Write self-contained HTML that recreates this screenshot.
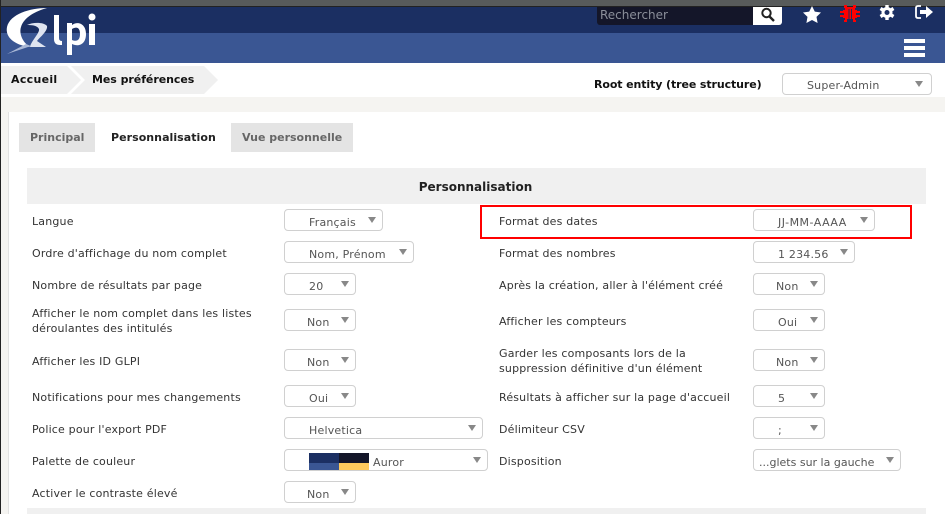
<!DOCTYPE html>
<html><head><meta charset="utf-8">
<style>
html,body{margin:0;padding:0;width:945px;height:514px;overflow:hidden;background:#fff}
body{position:relative;font-family:"DejaVu Sans",sans-serif;font-size:11px;color:#333}
div,span{position:absolute;box-sizing:border-box}
.l{white-space:nowrap;line-height:14px;letter-spacing:.18px;color:#333;margin-top:1px}
.h{font-weight:bold;letter-spacing:0;color:#111}
.s{height:22px;border:1px solid #d0d0d0;border-radius:4px;background:#fff;color:#555;white-space:nowrap}
.s span.t{left:24px;top:6px;line-height:14px;letter-spacing:.2px}
.s i{position:absolute;right:6px;top:7px;width:0;height:0;border-left:4.500px solid transparent;border-right:4.500px solid transparent;border-top:6px solid #888}
</style></head><body>
<div style="left:0;top:0;width:945px;height:7px;background:#585b5b;border-bottom:1px solid #222"></div>
<div style="left:0;top:7px;width:945px;height:26px;background:#1b2f62"></div>
<div style="left:0;top:33px;width:945px;height:30px;background:#3a5693"></div>
<div style="left:0;top:0;width:1px;height:514px;background:#222"></div>

<svg style="position:absolute;left:0;top:0" width="110" height="64">
<path d="M47 8C30 8 10 14 7 27C5 37 14 45 30 47C22 42 19 33 21 27C24 17 36 11 47 8Z" fill="#fff"/>
<path d="M27 25C33 22 44 22 47 26C48 31 40 37 37 41L46 47L30 47C31 41 40 33 39 29C37 25 31 25 27 25Z" fill="#dfe4f0"/>
<path d="M7 54L26 44L31 46Z" fill="#aab8d6"/>
<path d="M54 15h5v23q0 3 3 3v4h-2q-6 0-6-6Z" fill="#fff"/>
<path d="M67 23h5v2c5-4 14-2 14 9c0 11-8 13-14 10v11h-5Zm5 6v11c5 2 8 0 8-6c0-6-3-8-8-5Z" fill="#fff" fill-rule="evenodd"/>
<rect x="89" y="24" width="6" height="21" fill="#fff"/>
<circle cx="92" cy="17" r="3.500" fill="#fff"/>
</svg>

<div style="left:597px;top:7px;width:157px;height:18px;background:#141629;border-radius:0 0 0 3px"></div>
<div style="left:600px;top:7px;color:#8a8e99;font-size:12px;line-height:16px;white-space:nowrap">Rechercher</div>
<div style="left:753px;top:7px;width:29px;height:18px;background:#fff;border-radius:0 0 3px 0"></div>
<svg style="position:absolute;left:760px;top:7px" width="16" height="16"><circle cx="6.500" cy="6" r="4.200" fill="none" stroke="#222" stroke-width="2"/><path d="M9.500 9.500L14 14" stroke="#222" stroke-width="2.400"/></svg>
<svg style="position:absolute;left:802px;top:5px" width="20" height="18"><path d="M10 1l2.800 5.600 6.200.9-4.500 4.400 1.100 6.100-5.600-3-5.600 3 1.100-6.100L1 7.500l6.200-.9Z" fill="#fff"/></svg>
<svg style="position:absolute;left:840px;top:5px" width="20" height="17"><path d="M4 0h3v2h6V0h3v3h-1v2h2v1h3v2h-4v2h4v2h-3v1h-2v2h1v2h-3v-3H7v3H4v-2h1v-2H3v-1H0v-2h4V8H0V6h3V5h2V3H4Z" fill="#f00"/><path d="M9 4v12M11.500 4v12" stroke="#1b2f62" stroke-width="1"/></svg>
<svg style="position:absolute;left:878px;top:4px" width="18" height="17"><circle cx="9" cy="8.500" r="5.500" fill="#fff"/><path d="M9 1v3M9 13v3M2.500 4.500l2.500 1.500M13 11l2.500 1.500M2.500 12.500L5 11M13 6l2.500-1.500" stroke="#fff" stroke-width="3.400"/><circle cx="9" cy="8.500" r="2.500" fill="#1b2f62"/></svg>
<svg style="position:absolute;left:914px;top:4px" width="20" height="16"><path d="M7 2H4Q2 2 2 4v8q0 2 2 2h3" fill="none" stroke="#fff" stroke-width="1.800"/><path d="M6 6h6V2l7 6-7 6v-4H6Z" fill="#fff"/></svg>
<div style="left:904px;top:39px;width:21px;height:4px;background:#fff"></div>
<div style="left:904px;top:46px;width:21px;height:4px;background:#fff"></div>
<div style="left:904px;top:53px;width:21px;height:4px;background:#fff"></div>

<svg style="position:absolute;left:1px;top:66px" width="220" height="28"><path d="M0 0H66L80 14L66 28H0Z" fill="#f0f0f0"/><path d="M70 0H203L217 14L203 28H70L84 14Z" fill="#f0f0f0"/></svg>
<div class="l h" style="left:11px;top:72px;letter-spacing:.3px">Accueil</div>
<div class="l h" style="left:92px;top:72px;letter-spacing:-.05px">Mes préférences</div>
<div class="l h" style="left:594px;top:77px;letter-spacing:-.1px">Root entity (tree structure)</div>
<div class="s" style="left:782px;top:73px;width:150px"><span class="t" style="top:5px">Super-Admin</span><i style="right:8px"></i></div>

<div style="left:1px;top:97px;width:944px;height:417px;background:#f5f4f1"></div>
<div style="left:8px;top:112px;width:937px;height:402px;background:#fff;border-left:1px solid #e2e2e2"></div>

<div style="left:19px;top:123px;width:76px;height:29px;background:#e4e4e4"></div>
<div class="l h" style="left:30px;top:130px;color:#666">Principal</div>
<div class="l h" style="left:111px;top:130px;color:#222;letter-spacing:.05px">Personnalisation</div>
<div style="left:231px;top:123px;width:122px;height:29px;background:#e4e4e4"></div>
<div class="l h" style="left:242px;top:130px;color:#666">Vue personnelle</div>

<div style="left:27px;top:168px;width:899px;height:36px;background:#f0f0f0"></div>
<div style="left:26px;top:179px;width:899px;text-align:center;font-weight:bold;font-size:12px;line-height:16px;color:#222">Personnalisation</div>

<div class="l" style="left:32px;top:214px">Langue</div>
<div class="l" style="left:32px;top:246px">Ordre d'affichage du nom complet</div>
<div class="l" style="left:32px;top:278px">Nombre de résultats par page</div>
<div class="l" style="left:32px;top:306px">Afficher le nom complet dans les listes</div>
<div class="l" style="left:32px;top:321px">déroulantes des intitulés</div>
<div class="l" style="left:32px;top:354px">Afficher les ID GLPI</div>
<div class="l" style="left:32px;top:390px">Notifications pour mes changements</div>
<div class="l" style="left:32px;top:422px">Police pour l'export PDF</div>
<div class="l" style="left:32px;top:454px">Palette de couleur</div>
<div class="l" style="left:32px;top:486px">Activer le contraste élevé</div>

<div class="s" style="left:284px;top:209px;width:99px"><span class="t">Français</span><i></i></div>
<div class="s" style="left:284px;top:241px;width:130px"><span class="t">Nom, Prénom</span><i></i></div>
<div class="s" style="left:284px;top:273px;width:72px"><span class="t">20</span><i></i></div>
<div class="s" style="left:284px;top:309px;width:72px"><span class="t" style="left:22px">Non</span><i></i></div>
<div class="s" style="left:284px;top:349px;width:72px"><span class="t" style="left:22px">Non</span><i></i></div>
<div class="s" style="left:284px;top:385px;width:72px"><span class="t">Oui</span><i></i></div>
<div class="s" style="left:284px;top:417px;width:199px"><span class="t">Helvetica</span><i></i></div>
<div class="s" style="left:284px;top:449px;width:204px">
<span style="left:24px;top:3px;width:30px;height:10px;background:#1b2f62"></span>
<span style="left:54px;top:3px;width:30px;height:10px;background:#141629"></span>
<span style="left:24px;top:13px;width:30px;height:7px;background:#3a5693"></span>
<span style="left:54px;top:13px;width:30px;height:7px;background:#fec95c"></span>
<span class="t" style="left:88px">Auror</span><i></i></div>
<div class="s" style="left:284px;top:481px;width:72px"><span class="t" style="left:22px">Non</span><i></i></div>

<div class="l" style="left:499px;top:214px">Format des dates</div>
<div class="l" style="left:499px;top:246px">Format des nombres</div>
<div class="l" style="left:499px;top:278px">Après la création, aller à l'élément créé</div>
<div class="l" style="left:499px;top:314px">Afficher les compteurs</div>
<div class="l" style="left:499px;top:346px">Garder les composants lors de la</div>
<div class="l" style="left:499px;top:361px">suppression définitive d'un élément</div>
<div class="l" style="left:499px;top:390px">Résultats à afficher sur la page d'accueil</div>
<div class="l" style="left:499px;top:422px">Délimiteur CSV</div>
<div class="l" style="left:499px;top:454px">Disposition</div>

<div class="s" style="left:753px;top:209px;width:122px"><span class="t" style="letter-spacing:.5px">JJ-MM-AAAA</span><i></i></div>
<div class="s" style="left:753px;top:241px;width:102px"><span class="t">1 234.56</span><i></i></div>
<div class="s" style="left:753px;top:273px;width:72px"><span class="t" style="left:22px">Non</span><i></i></div>
<div class="s" style="left:753px;top:309px;width:72px"><span class="t">Oui</span><i></i></div>
<div class="s" style="left:753px;top:349px;width:72px"><span class="t" style="left:22px">Non</span><i></i></div>
<div class="s" style="left:753px;top:385px;width:72px"><span class="t">5</span><i></i></div>
<div class="s" style="left:753px;top:417px;width:72px"><span class="t">;</span><i></i></div>
<div class="s" style="left:753px;top:449px;width:148px"><span class="t" style="left:5px;letter-spacing:0">...glets sur la gauche</span><i></i></div>

<div style="left:480px;top:205px;width:432px;height:34px;border:2px solid #f00"></div>
<div style="left:27px;top:508px;width:899px;height:6px;background:#f0f0f0"></div>
</body></html>
